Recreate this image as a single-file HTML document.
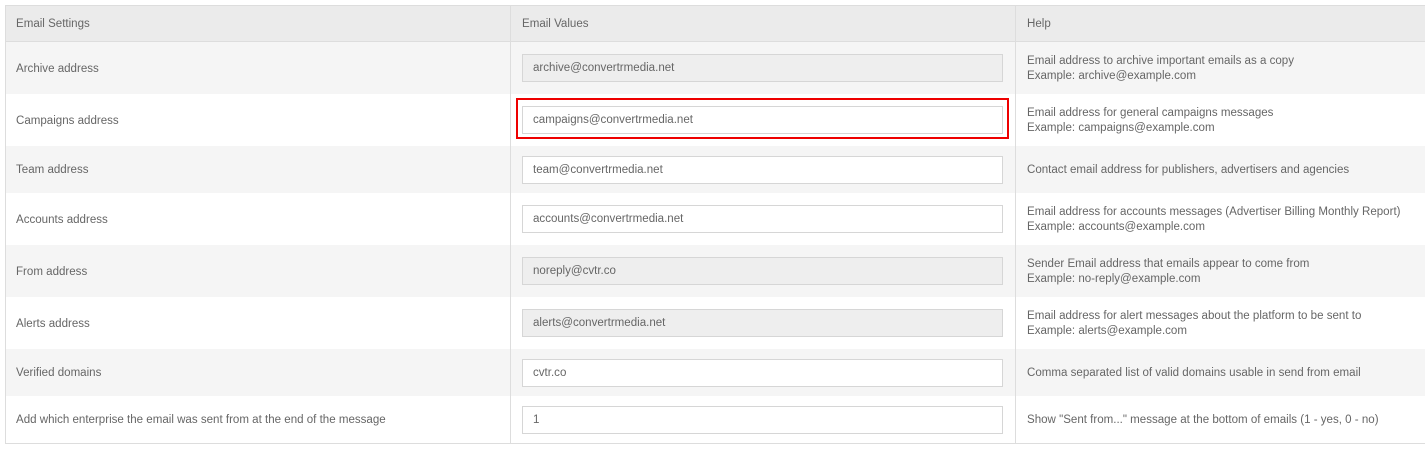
<!DOCTYPE html>
<html><head><style>
body{margin:0;width:1425px;height:450px;background:#fff;font-family:"Liberation Sans",Arial,sans-serif;font-size:11.55px;color:#666;position:relative;overflow:hidden}
.r{position:absolute;left:5px;width:1420px;box-sizing:border-box}
.g{background:#f5f5f5}.h{background:#ebebeb;border-bottom:1px solid #ddd}
.c{position:absolute;top:0;bottom:0;display:flex;align-items:center;padding-left:11px;padding-top:2px;box-sizing:border-box;line-height:15px}
.c1{left:0;width:505px}.c2{left:505px;width:505px;border-left:1px solid #ddd}.c3{left:1010px;width:410px;border-left:1px solid #ddd}
.in{position:absolute;left:517px;width:481px;height:28px;border:1px solid #d6d6d6;background:#fff;box-sizing:border-box;padding-left:10px;line-height:27px;color:#666}
.d{background:#eee}
.red{position:absolute;left:516px;top:98px;width:493px;height:41px;border:2px solid #e00;box-sizing:border-box}
.lb{position:absolute;left:5px;top:5px;width:1px;height:438px;background:#ddd}
.bb{position:absolute;left:5px;top:443px;width:1420px;height:1px;background:#ddd}
</style></head><body>
<div class="r h" style="top:5px;height:37px;border-top:1px solid #ddd"><div class="c c1">Email Settings</div><div class="c c2">Email Values</div><div class="c c3">Help</div></div>
<div class="r g" style="top:42px;height:52px"><div class="c c1">Archive address</div><div class="c c2"></div><div class="c c3">Email address to archive important emails as a copy<br>Example: archive@example.com</div></div>
<div class="r" style="top:94px;height:52px"><div class="c c1">Campaigns address</div><div class="c c2"></div><div class="c c3">Email address for general campaigns messages<br>Example: campaigns@example.com</div></div>
<div class="r g" style="top:146px;height:47px"><div class="c c1">Team address</div><div class="c c2"></div><div class="c c3">Contact email address for publishers, advertisers and agencies</div></div>
<div class="r" style="top:193px;height:52px"><div class="c c1">Accounts address</div><div class="c c2"></div><div class="c c3">Email address for accounts messages (Advertiser Billing Monthly Report)<br>Example: accounts@example.com</div></div>
<div class="r g" style="top:245px;height:52px"><div class="c c1">From address</div><div class="c c2"></div><div class="c c3">Sender Email address that emails appear to come from<br>Example: no-reply@example.com</div></div>
<div class="r" style="top:297px;height:52px"><div class="c c1">Alerts address</div><div class="c c2"></div><div class="c c3">Email address for alert messages about the platform to be sent to<br>Example: alerts@example.com</div></div>
<div class="r g" style="top:349px;height:47px"><div class="c c1">Verified domains</div><div class="c c2"></div><div class="c c3">Comma separated list of valid domains usable in send from email</div></div>
<div class="r" style="top:396px;height:47px"><div class="c c1">Add which enterprise the email was sent from at the end of the message</div><div class="c c2"></div><div class="c c3">Show "Sent from..." message at the bottom of emails (1 - yes, 0 - no)</div></div>
<div class="lb"></div><div class="bb"></div>
<div class="in d" style="left:522px;top:54px">archive@convertrmedia.net</div>
<div class="in" style="left:522px;top:106px">campaigns@convertrmedia.net</div>
<div class="red"></div>
<div class="in" style="left:522px;top:156px">team@convertrmedia.net</div>
<div class="in" style="left:522px;top:205px">accounts@convertrmedia.net</div>
<div class="in d" style="left:522px;top:257px">noreply@cvtr.co</div>
<div class="in d" style="left:522px;top:309px">alerts@convertrmedia.net</div>
<div class="in" style="left:522px;top:359px">cvtr.co</div>
<div class="in" style="left:522px;top:406px">1</div>
</body></html>
